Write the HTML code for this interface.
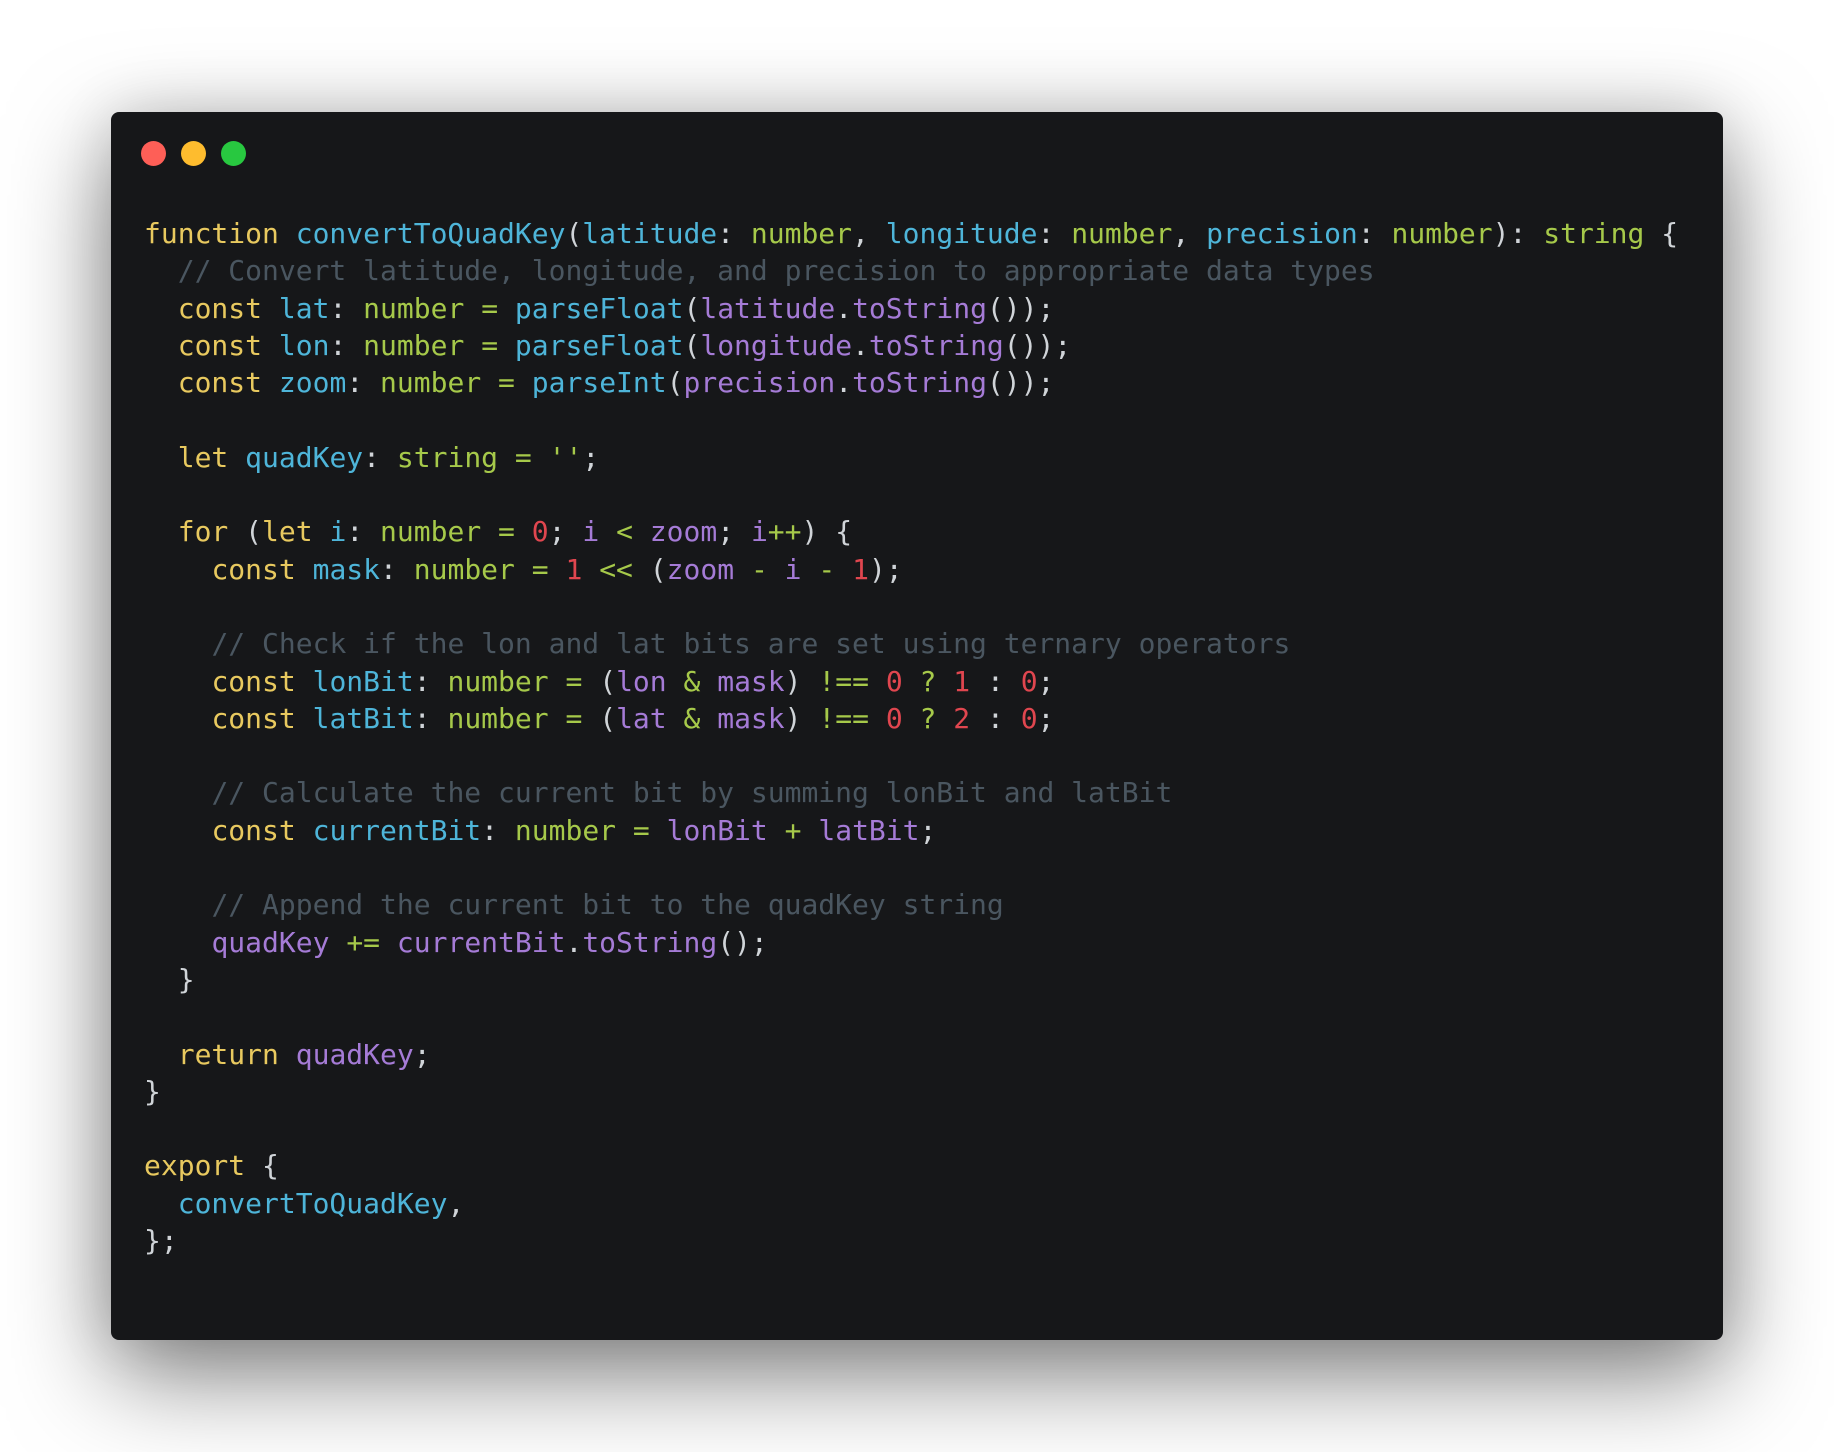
<!DOCTYPE html>
<html><head><meta charset="utf-8"><style>
html,body{margin:0;padding:0;}
body{width:1834px;height:1452px;background:#fff;position:relative;overflow:hidden;}
.win{position:absolute;left:111px;top:112px;width:1612px;height:1228px;background:#161719;border-radius:8px;box-shadow:0 35px 100px rgba(0,0,0,0.5),0 0 60px rgba(0,0,0,0.12);}
.dot{position:absolute;top:141px;width:25px;height:25px;border-radius:50%;}
pre{position:absolute;left:144px;top:215px;margin:0;font-family:"DejaVu Sans Mono","Liberation Mono",monospace;font-size:28px;line-height:37.3px;color:#d0d4d8;}
.k{color:#e8c95f}.f{color:#4eb5d9}.t{color:#a6c94a}.v{color:#a57bd6}.n{color:#e0464f}.c{color:#4a5660}
</style></head><body>
<div class="win"></div>
<div class="dot" style="left:141px;background:#fe5f57"></div>
<div class="dot" style="left:181px;background:#febc2e"></div>
<div class="dot" style="left:221px;background:#28c840"></div>
<pre><span class="k">function</span> <span class="f">convertToQuadKey</span>(<span class="f">latitude</span>: <span class="t">number</span>, <span class="f">longitude</span>: <span class="t">number</span>, <span class="f">precision</span>: <span class="t">number</span>): <span class="t">string</span> {
  <span class="c">// Convert latitude, longitude, and precision to appropriate data types</span>
  <span class="k">const</span> <span class="f">lat</span>: <span class="t">number</span> <span class="t">=</span> <span class="f">parseFloat</span>(<span class="v">latitude</span>.<span class="v">toString</span>());
  <span class="k">const</span> <span class="f">lon</span>: <span class="t">number</span> <span class="t">=</span> <span class="f">parseFloat</span>(<span class="v">longitude</span>.<span class="v">toString</span>());
  <span class="k">const</span> <span class="f">zoom</span>: <span class="t">number</span> <span class="t">=</span> <span class="f">parseInt</span>(<span class="v">precision</span>.<span class="v">toString</span>());

  <span class="k">let</span> <span class="f">quadKey</span>: <span class="t">string</span> <span class="t">=</span> <span class="t">''</span>;

  <span class="k">for</span> (<span class="k">let</span> <span class="f">i</span>: <span class="t">number</span> <span class="t">=</span> <span class="n">0</span>; <span class="v">i</span> <span class="t">&lt;</span> <span class="v">zoom</span>; <span class="v">i</span><span class="t">++</span>) {
    <span class="k">const</span> <span class="f">mask</span>: <span class="t">number</span> <span class="t">=</span> <span class="n">1</span> <span class="t">&lt;&lt;</span> (<span class="v">zoom</span> <span class="t">-</span> <span class="v">i</span> <span class="t">-</span> <span class="n">1</span>);

    <span class="c">// Check if the lon and lat bits are set using ternary operators</span>
    <span class="k">const</span> <span class="f">lonBit</span>: <span class="t">number</span> <span class="t">=</span> (<span class="v">lon</span> <span class="t">&amp;</span> <span class="v">mask</span>) <span class="t">!==</span> <span class="n">0</span> <span class="t">?</span> <span class="n">1</span> : <span class="n">0</span>;
    <span class="k">const</span> <span class="f">latBit</span>: <span class="t">number</span> <span class="t">=</span> (<span class="v">lat</span> <span class="t">&amp;</span> <span class="v">mask</span>) <span class="t">!==</span> <span class="n">0</span> <span class="t">?</span> <span class="n">2</span> : <span class="n">0</span>;

    <span class="c">// Calculate the current bit by summing lonBit and latBit</span>
    <span class="k">const</span> <span class="f">currentBit</span>: <span class="t">number</span> <span class="t">=</span> <span class="v">lonBit</span> <span class="t">+</span> <span class="v">latBit</span>;

    <span class="c">// Append the current bit to the quadKey string</span>
    <span class="v">quadKey</span> <span class="t">+=</span> <span class="v">currentBit</span>.<span class="v">toString</span>();
  }

  <span class="k">return</span> <span class="v">quadKey</span>;
}

<span class="k">export</span> {
  <span class="f">convertToQuadKey</span>,
};</pre>
</body></html>
